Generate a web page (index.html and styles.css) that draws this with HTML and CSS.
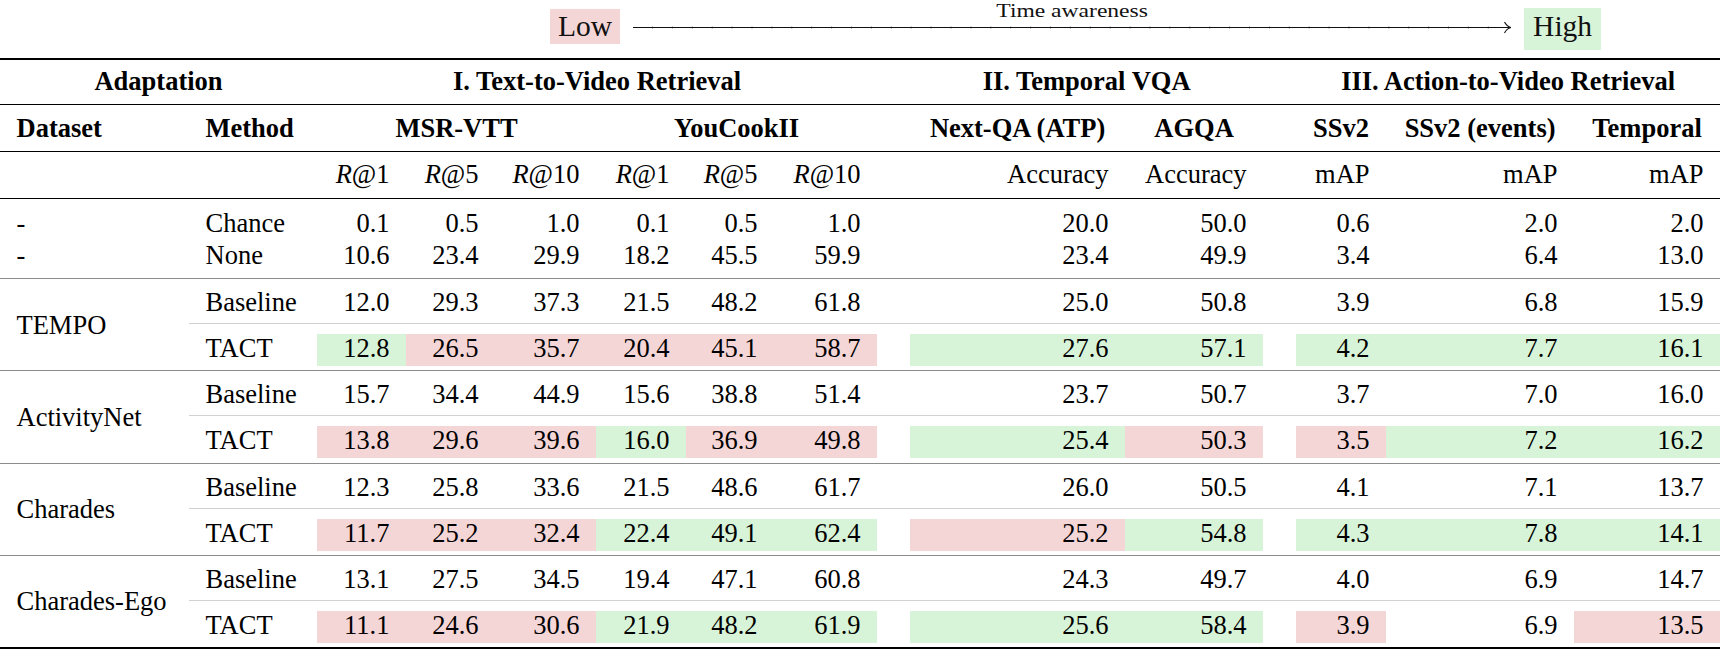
FILE: index.html
```html
<!DOCTYPE html>
<html lang="en">
<head>
<meta charset="utf-8">
<title>Time awareness results</title>
<link rel="stylesheet" href="styles.css">
</head>
<body>
<div class="legend">
  <span class="tag tag-low">Low</span>
  <div class="arrow">
    <div class="arrow-label"><span>Time awareness</span></div>
    <svg class="arrow-svg" width="878" height="13" viewBox="0 0 878 13">
      <line x1="0" y1="6.5" x2="877" y2="6.5" stroke="#111" stroke-width="1.2"/>
      <line x1="19" y1="6.5" x2="870" y2="6.5" stroke="#111" stroke-width="2.4" stroke-dasharray="1 18.9" opacity="0.35"/>
      <path d="M871.5 1 C872.8 3.6 874.8 5.7 878 6.5 C874.8 7.3 872.8 9.4 871.5 12" fill="none" stroke="#111" stroke-width="1.1"/>
    </svg>
  </div>
  <span class="tag tag-high">High</span>
</div>

<table class="results">
  <colgroup>
    <col class="w-ds"><col class="w-me">
    <col class="w-r1a"><col class="w-r5a"><col class="w-r10a">
    <col class="w-r1b"><col class="w-r5b"><col class="w-r10b">
    <col class="w-gap">
    <col class="w-nqa"><col class="w-agqa">
    <col class="w-gap">
    <col class="w-ssv2"><col class="w-ssv2e"><col class="w-temp">
  </colgroup>
  <thead>
    <tr class="r-top">
      <th colspan="2">Adaptation</th>
      <th colspan="6">I. Text-to-Video Retrieval</th>
      <th class="gap"></th>
      <th colspan="2">II. Temporal VQA</th>
      <th class="gap"></th>
      <th colspan="3">III. Action-to-Video Retrieval</th>
    </tr>
    <tr class="r-head">
      <th class="l">Dataset</th>
      <th class="l">Method</th>
      <th colspan="3">MSR-VTT</th>
      <th colspan="3">YouCookII</th>
      <th class="gap"></th>
      <th>Next-QA (ATP)</th>
      <th>AGQA</th>
      <th class="gap"></th>
      <th>SSv2</th>
      <th>SSv2 (events)</th>
      <th>Temporal</th>
    </tr>
    <tr class="r-unit">
      <td></td><td></td>
      <td><i>R</i>@1</td><td><i>R</i>@5</td><td><i>R</i>@10</td>
      <td><i>R</i>@1</td><td><i>R</i>@5</td><td><i>R</i>@10</td>
      <td class="gap"></td>
      <td>Accuracy</td><td>Accuracy</td>
      <td class="gap"></td>
      <td>mAP</td><td>mAP</td><td>mAP</td>
    </tr>
  </thead>
  <tbody>
    <tr class="r-chance">
      <td class="l">-</td><td class="l">Chance</td>
      <td>0.1</td><td>0.5</td><td>1.0</td><td>0.1</td><td>0.5</td><td>1.0</td>
      <td class="gap"></td>
      <td>20.0</td><td>50.0</td>
      <td class="gap"></td>
      <td>0.6</td><td>2.0</td><td>2.0</td>
    </tr>
    <tr class="r-none">
      <td class="l">-</td><td class="l">None</td>
      <td>10.6</td><td>23.4</td><td>29.9</td><td>18.2</td><td>45.5</td><td>59.9</td>
      <td class="gap"></td>
      <td>23.4</td><td>49.9</td>
      <td class="gap"></td>
      <td>3.4</td><td>6.4</td><td>13.0</td>
    </tr>

    <tr class="r-base">
      <td class="l ds" rowspan="2">TEMPO</td><td class="l">Baseline</td>
      <td>12.0</td><td>29.3</td><td>37.3</td><td>21.5</td><td>48.2</td><td>61.8</td>
      <td class="gap"></td>
      <td>25.0</td><td>50.8</td>
      <td class="gap"></td>
      <td>3.9</td><td>6.8</td><td>15.9</td>
    </tr>
    <tr class="r-tact">
      <td class="l"><div class="in">TACT</div></td>
      <td><div class="in gr">12.8</div></td><td><div class="in pk">26.5</div></td><td><div class="in pk">35.7</div></td>
      <td><div class="in pk">20.4</div></td><td><div class="in pk">45.1</div></td><td><div class="in pk">58.7</div></td>
      <td class="gap"></td>
      <td><div class="in gr">27.6</div></td><td><div class="in gr">57.1</div></td>
      <td class="gap"></td>
      <td><div class="in gr">4.2</div></td><td><div class="in gr">7.7</div></td><td><div class="in gr">16.1</div></td>
    </tr>

    <tr class="r-base">
      <td class="l ds" rowspan="2">ActivityNet</td><td class="l">Baseline</td>
      <td>15.7</td><td>34.4</td><td>44.9</td><td>15.6</td><td>38.8</td><td>51.4</td>
      <td class="gap"></td>
      <td>23.7</td><td>50.7</td>
      <td class="gap"></td>
      <td>3.7</td><td>7.0</td><td>16.0</td>
    </tr>
    <tr class="r-tact">
      <td class="l"><div class="in">TACT</div></td>
      <td><div class="in pk">13.8</div></td><td><div class="in pk">29.6</div></td><td><div class="in pk">39.6</div></td>
      <td><div class="in gr">16.0</div></td><td><div class="in pk">36.9</div></td><td><div class="in pk">49.8</div></td>
      <td class="gap"></td>
      <td><div class="in gr">25.4</div></td><td><div class="in pk">50.3</div></td>
      <td class="gap"></td>
      <td><div class="in pk">3.5</div></td><td><div class="in gr">7.2</div></td><td><div class="in gr">16.2</div></td>
    </tr>

    <tr class="r-base">
      <td class="l ds" rowspan="2">Charades</td><td class="l">Baseline</td>
      <td>12.3</td><td>25.8</td><td>33.6</td><td>21.5</td><td>48.6</td><td>61.7</td>
      <td class="gap"></td>
      <td>26.0</td><td>50.5</td>
      <td class="gap"></td>
      <td>4.1</td><td>7.1</td><td>13.7</td>
    </tr>
    <tr class="r-tact">
      <td class="l"><div class="in">TACT</div></td>
      <td><div class="in pk">11.7</div></td><td><div class="in pk">25.2</div></td><td><div class="in pk">32.4</div></td>
      <td><div class="in gr">22.4</div></td><td><div class="in gr">49.1</div></td><td><div class="in gr">62.4</div></td>
      <td class="gap"></td>
      <td><div class="in pk">25.2</div></td><td><div class="in gr">54.8</div></td>
      <td class="gap"></td>
      <td><div class="in gr">4.3</div></td><td><div class="in gr">7.8</div></td><td><div class="in gr">14.1</div></td>
    </tr>

    <tr class="r-base">
      <td class="l ds ds-last" rowspan="2">Charades-Ego</td><td class="l">Baseline</td>
      <td>13.1</td><td>27.5</td><td>34.5</td><td>19.4</td><td>47.1</td><td>60.8</td>
      <td class="gap"></td>
      <td>24.3</td><td>49.7</td>
      <td class="gap"></td>
      <td>4.0</td><td>6.9</td><td>14.7</td>
    </tr>
    <tr class="r-tact r-last">
      <td class="l"><div class="in">TACT</div></td>
      <td><div class="in pk">11.1</div></td><td><div class="in pk">24.6</div></td><td><div class="in pk">30.6</div></td>
      <td><div class="in gr">21.9</div></td><td><div class="in gr">48.2</div></td><td><div class="in gr">61.9</div></td>
      <td class="gap"></td>
      <td><div class="in gr">25.6</div></td><td><div class="in gr">58.4</div></td>
      <td class="gap"></td>
      <td><div class="in pk">3.9</div></td><td><div class="in">6.9</div></td><td><div class="in pk">13.5</div></td>
    </tr>
  </tbody>
</table>
</body>
</html>
```

FILE: styles.css
```css
html, body {
  margin: 0;
  padding: 0;
  background: #ffffff;
}

body {
  width: 1724px;
  color: #000;
  font-family: "Liberation Serif", "Times New Roman", serif;
}

/* ---------- legend ---------- */
.legend {
  display: flex;
  align-items: flex-start;
  gap: 13px;
  height: 58px;
  padding-left: 550px;
}

.tag {
  flex: none;
  font-size: 29.5px;
  line-height: 29.5px;
  color: #111;
}

.tag-low {
  background: #f5d6d7;
  margin-top: 9px;
  padding: 3px 8px 2.2px;
}

.tag-high {
  background: #d8f4d8;
  margin-top: 8.3px;
  padding: 3.7px 9px 8.5px;
}

.arrow {
  flex: none;
  width: 878px;
}

.arrow-label {
  height: 19.6px;
  padding-top: 1.4px;
  font-size: 19px;
  line-height: 19px;
  text-align: center;
  color: #111;
}

.arrow-label span {
  display: inline-block;
  transform: scaleX(1.24);
}

.arrow-svg {
  display: block;
}

/* ---------- table ---------- */
.results {
  border-collapse: separate;
  border-spacing: 0;
  table-layout: fixed;
  width: 1720px;
  font-size: 26.5px;
  line-height: 32px;
}

.results th,
.results td {
  padding: 0 16.5px;
  vertical-align: top;
  white-space: nowrap;
  text-align: right;
}

.results th {
  font-weight: bold;
  text-align: center;
}

.results .l {
  text-align: left;
}

.results .gap {
  padding: 0;
}

.w-ds { width: 189px; }
.w-me { width: 128px; }
.w-r1a { width: 89px; }
.w-r5a { width: 89px; }
.w-r10a { width: 101px; }
.w-r1b { width: 90px; }
.w-r5b { width: 88px; }
.w-r10b { width: 103px; }
.w-gap { width: 33px; }
.w-nqa { width: 215px; }
.w-agqa { width: 138px; }
.w-ssv2 { width: 90px; }
.w-ssv2e { width: 188px; }
.w-temp { width: 146px; }

.r-top > th {
  border-top: 2px solid #000;
  padding-top: 5px;
  padding-bottom: 7px;
}

.r-head > th {
  border-top: 1px solid #000;
  padding-top: 7px;
  padding-bottom: 7px;
}

.r-unit > td {
  border-top: 1px solid #000;
  padding-top: 6px;
  padding-bottom: 8px;
}

.r-chance > td {
  border-top: 1px solid #000;
  padding-top: 8px;
  padding-bottom: 0;
}

.r-none > td {
  padding-top: 0;
  padding-bottom: 7px;
}

.r-base > td {
  border-top: 1px solid #8c8c8c;
  padding-top: 7px;
  padding-bottom: 5px;
}

.r-base > td.ds {
  padding-top: 0;
  padding-bottom: 0;
  vertical-align: middle;
}

.r-tact > td {
  border-top: 1px solid #d2d2d2;
  padding: 10px 0 4.25px;
}

.r-last > td,
.results td.ds-last {
  border-bottom: 2px solid #000;
}

.in {
  height: 32px;
  line-height: 28.7px;
  padding: 0 16.5px;
}

.pk { background: #f5d6d7; }
.gr { background: #d8f4d8; }
```
